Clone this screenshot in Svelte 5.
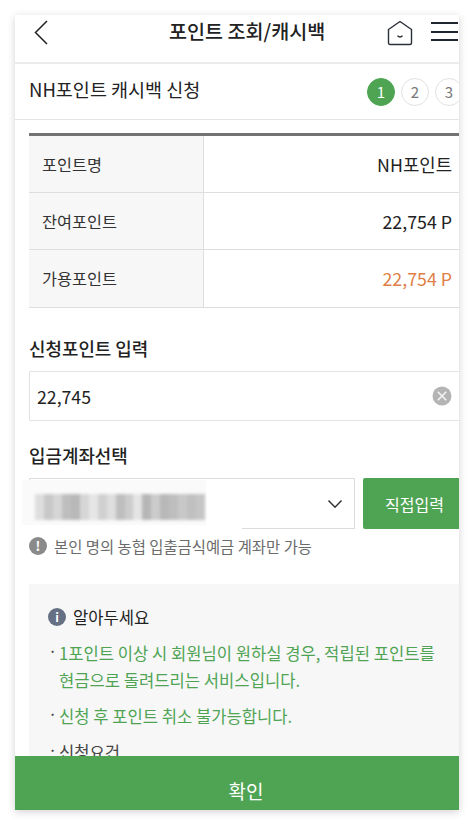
<script lang="ts">
  const rows = [
    { label: '포인트명', value: 'NH포인트', accent: false },
    { label: '잔여포인트', value: '22,754 P', accent: false },
    { label: '가용포인트', value: '22,754 P', accent: true },
  ];

  // mosaic over the masked account number
  const mosaic = [222, 200, 214, 190, 184, 214, 230, 208, 222, 190, 204, 228, 182, 204, 184, 190, 200, 192, 198];
</script>

<div class="page">
  <div class="frame">
    <header class="topbar">
      <button class="back" aria-label="뒤로">
        <svg width="16" height="26" viewBox="0 0 16 26"><path d="M14 2 2.5 13.5 14 25" fill="none" stroke="#222" stroke-width="1.5" /></svg>
      </button>
      <h1>포인트 조회/캐시백</h1>
      <svg class="home" width="26" height="26" viewBox="0 0 26 26">
        <path d="M13 1.5 24.5 9.5V23a1.5 1.5 0 0 1-1.5 1.5H3A1.5 1.5 0 0 1 1.5 23V9.5Z" fill="none" stroke="#2a3038" stroke-width="1.4" stroke-linejoin="round" />
        <path d="M11 16.200c.6 1 3.400 1 4 0" fill="none" stroke="#2a3038" stroke-width="1.600" stroke-linecap="round" />
      </svg>
      <div class="menu"><i></i><i></i><i></i></div>
    </header>

    <div class="subbar">
      <span class="subtitle">NH포인트 캐시백 신청</span>
      <div class="steps">
        <span class="step on">1</span>
        <span class="step">2</span>
        <span class="step">3</span>
      </div>
    </div>

    <main class="content">
      <div class="table">
        {#each rows as row}
          <div class="row">
            <div class="th">{row.label}</div>
            <div class="td" class:accent={row.accent}>{row.value}</div>
          </div>
        {/each}
      </div>

      <h2 class="label first">신청포인트 입력</h2>
      <div class="input">
        <span>22,745</span>
        <svg width="20" height="20" viewBox="0 0 20 20">
          <circle cx="10" cy="10" r="9.500" fill="#b4b4b4" />
          <path d="M5.800 5.800 14.200 14.200M14.200 5.800 5.800 14.200" stroke="#f4f4f4" stroke-width="1.600" />
        </svg>
      </div>

      <h2 class="label second">입금계좌선택</h2>
      <div class="account">
        <div class="select">
          <svg width="16" height="10" viewBox="0 0 16 10"><path d="M1.500 1.500 8 8.200 14.500 1.500" fill="none" stroke="#333" stroke-width="1.500" /></svg>
        </div>
        <button class="direct">직접입력</button>
        <div class="mask">
          <div class="haze">
            <div class="blocks">
              {#each mosaic as g}
                <i style="background: rgb({g},{g},{g})"></i>
              {/each}
            </div>
          </div>
        </div>
      </div>

      <p class="notice">
        <span class="bang">!</span>
        본인 명의 농협 입출금식예금 계좌만 가능
      </p>

      <section class="info">
        <div class="info-title"><span class="i">i</span>알아두세요</div>
        <ul>
          <li class="green">1포인트 이상 시 회원님이 원하실 경우, 적립된 포인트를 현금으로 돌려드리는 서비스입니다.</li>
          <li class="green">신청 후 포인트 취소 불가능합니다.</li>
          <li>신청요건</li>
        </ul>
      </section>
    </main>

    <button class="confirm">확인</button>
  </div>
</div>

<style>
  :global(body) {
    margin: 0;
    background: #fff;
    font-family: "Noto Sans CJK KR", "Noto Sans", sans-serif;
    color: #222;
  }

  .page {
    width: 474px;
    height: 826px;
    padding: 15px 15px 16px;
    box-sizing: border-box;
  }

  .frame {
    height: 795px;
    display: flex;
    flex-direction: column;
    background: #fff;
    overflow: hidden;
    box-shadow: 0 2px 8px rgba(0, 0, 0, 0.18);
  }

  button {
    font-family: inherit;
    border: 0;
    padding: 0;
    background: none;
  }

  .topbar {
    flex: none;
    height: 47px;
    border-bottom: 2px solid #ececec;
    display: flex;
    align-items: flex-start;
  }

  .back {
    margin: 4px 0 0 18px;
    height: 26px;
    display: flex;
  }

  h1 {
    margin: 0 0 0 120px;
    font-size: 19.600px;
    font-weight: 500;
    line-height: 32px;
    width: 158px;
    white-space: nowrap;
  }

  .home {
    margin: 5px 0 0 60px;
    flex: none;
  }

  .menu {
    margin: 7px 0 0 18px;
    width: 27px;
    height: 19px;
    flex: none;
    display: flex;
    flex-direction: column;
    justify-content: space-between;
  }

  .menu i {
    height: 2px;
    background: #1f2630;
  }

  .subbar {
    flex: none;
    height: 55px;
    border-bottom: 1px solid #e4e4e4;
    display: flex;
    align-items: center;
    justify-content: space-between;
    padding-left: 14px;
    overflow: hidden;
  }

  .subtitle {
    font-size: 18.500px;
    line-height: 26px;
    margin-top: -5px;
  }

  .steps {
    display: flex;
    gap: 6px;
    margin-right: -4px;
  }

  .step {
    width: 26px;
    height: 26px;
    border: 1px solid #e2e2e2;
    border-radius: 50%;
    display: flex;
    align-items: center;
    justify-content: center;
    font-size: 15px;
    color: #777;
  }

  .step.on {
    background: #4fa454;
    border-color: #4fa454;
    color: #fff;
  }

  .content {
    flex: 1;
    min-height: 0;
    overflow: hidden;
    padding: 13px 0 0 14px;
  }

  .table {
    border-top: 3px solid #737373;
  }

  .row {
    display: flex;
    height: 57px;
    box-sizing: border-box;
    border-bottom: 1px solid #dedede;
  }

  .row:last-child {
    height: 58px;
  }

  .th {
    width: 175px;
    box-sizing: border-box;
    background: #f7f7f7;
    border-right: 1px solid #dedede;
    padding-left: 13px;
    font-size: 16.300px;
    line-height: 56px;
    color: #333;
  }

  .td {
    flex: 1;
    text-align: right;
    padding-right: 7px;
    font-size: 17.800px;
    line-height: 56px;
  }

  .td.accent {
    color: #e07f47;
  }

  .label {
    margin: 0;
    font-size: 17.900px;
    font-weight: 500;
    line-height: 26px;
  }

  .label.first {
    margin-top: 27px;
  }

  .label.second {
    margin-top: 21px;
  }

  .input {
    margin-top: 10px;
    height: 50px;
    box-sizing: border-box;
    border: 1px solid #e2e2e2;
    border-right: 0;
    border-radius: 2px 0 0 2px;
    display: flex;
    align-items: center;
    justify-content: space-between;
    padding: 0 7px;
    font-size: 17.700px;
  }

  .input span {
    margin-top: -1px;
  }

  .account {
    margin-top: 10px;
    display: flex;
    gap: 8px;
    position: relative;
  }

  .select {
    width: 326px;
    height: 51px;
    box-sizing: border-box;
    border: 1px solid #dcdcdc;
    display: flex;
    align-items: center;
    justify-content: flex-end;
    padding-right: 11px;
  }

  .direct {
    flex: 1;
    background: #4fa454;
    color: #fff;
    font-size: 16px;
    font-weight: 400;
    padding-left: 7px;
    border-radius: 2px 0 0 2px;
  }

  .mask {
    position: absolute;
    left: -9px;
    top: 2px;
    width: 222px;
    height: 50px;
    background: #fff;
    overflow: hidden;
  }

  .haze {
    width: 184px;
    height: 45px;
    margin-left: 2px;
    padding: 14px 0 0 13px;
    box-sizing: border-box;
    background: #fafafa;
  }

  .blocks {
    display: flex;
    height: 26px;
    width: 170px;
    filter: blur(1.500px);
  }

  .blocks i {
    flex: 1;
  }

  .notice {
    margin: 7px 0 0;
    display: flex;
    align-items: center;
    gap: 7px;
    font-size: 15.400px;
    line-height: 20px;
    color: #6b6b6b;
  }

  .bang,
  .i {
    flex: none;
    width: 18px;
    height: 18px;
    border-radius: 50%;
    background: #8a8a8a;
    color: #fff;
    font-size: 13px;
    font-weight: 700;
    line-height: 18px;
    text-align: center;
  }

  .info {
    margin-top: 28px;
    background: #f7f7f7;
    padding: 22px 19px 0;
  }

  .info-title {
    display: flex;
    align-items: center;
    gap: 7px;
    font-size: 16.600px;
    line-height: 22px;
  }

  .i {
    background: #667084;
    font-size: 12px;
  }

  ul {
    list-style: none;
    margin: 12px 0 0;
    padding: 0;
  }

  li {
    position: relative;
    padding-left: 11px;
    font-size: 16.600px;
    line-height: 27px;
    margin-bottom: 9px;
    color: #444;
    word-break: keep-all;
  }

  li::before {
    content: "·";
    position: absolute;
    left: 0;
    top: -2px;
    color: #444;
  }

  li.green {
    color: #4fa454;
  }

  .confirm {
    flex: none;
    height: 54px;
    background: #4fa454;
    color: #fff;
    font-size: 19px;
    font-weight: 400;
    padding: 16px 0 0 18px;
    line-height: 30px;
  }
</style>
